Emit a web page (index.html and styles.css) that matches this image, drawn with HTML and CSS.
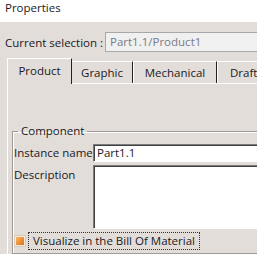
FILE: index.html
```html
<!DOCTYPE html>
<html lang="en">
<head>
    <meta charset="UTF-8">
    <title>Properties</title>
    <link rel="stylesheet" href="styles.css">
</head>
<body>
    <div class="title">Properties</div>
    <div class="dialog">
        <div class="selection">
            <span class="selection-label">Current selection :</span>
            <div class="selection-value">Part1.1/Product1</div>
        </div>
        <div class="tabs">
            <div class="tab active">Product</div>
            <div class="tab tab-graphic">Graphic</div>
            <div class="tab tab-mech">Mechanical</div>
            <div class="tab tab-draft">Drafting</div>
        </div>
        <div class="panel">
            <fieldset class="group">
                <legend>Component</legend>
                <div class="field">
                    <label class="field-label">Instance name</label>
                    <div class="input">Part1.1</div>
                </div>
                <div class="field">
                    <label class="field-label desc">Description</label>
                    <div class="textarea"></div>
                </div>
                <div class="check">
                    <span class="box"></span>
                    <span class="check-label">Visualize in the Bill Of Material</span>
                </div>
            </fieldset>
        </div>
    </div>
</body>
</html>
```

FILE: styles.css
```css
* {
    box-sizing: border-box;
}

html, body {
    margin: 0;
    overflow: hidden;
}

body {
    width: 257px;
    height: 254px;
    background: #e3ddd9;
    font-family: "Open Sans", "Noto Sans", sans-serif;
    font-size: 11.5px;
    color: #1a1a24;
    white-space: nowrap;
}

.title {
    background: #fff;
    height: 22px;
    padding-left: 5px;
    line-height: 16px;
}

.dialog {
    width: 400px;
}

/* current selection row */
.selection {
    display: flex;
    align-items: center;
    margin-top: 10px;
    padding-left: 5px;
}

.selection-label {
    width: 100px;
    flex: none;
}

.selection-value {
    width: 220px;
    height: 20px;
    line-height: 18px;
    padding-left: 4px;
    background: #f0f0f0;
    border: 1px solid #a8a8a8;
    color: #7a7a88;
}

/* tabs */
.tabs {
    display: flex;
    align-items: flex-end;
    margin-top: 6px;
    margin-left: 7px;
}

.tab {
    height: 22px;
    line-height: 21px;
    text-align: center;
    border-top: 1px solid #fff;
    border-left: 1px solid #fff;
    border-right: 1px solid #222;
}

.tab.active {
    position: relative;
    z-index: 1;
    width: 65px;
    height: 26px;
    line-height: 24px;
    margin-bottom: -1px;
    background: #e3ddd9;
}

.tab-graphic {
    width: 61px;
    border-left: none;
}

.tab-mech {
    width: 84px;
}

.tab-draft {
    width: 90px;
    text-align: left;
    padding-left: 12px;
}

/* tab panel */
.panel {
    margin-left: 7px;
    border-top: 1px solid #fff;
    border-left: 1px solid #fff;
    padding-left: 4px;
}

.group {
    margin: 39px 0 0 0;
    padding: 0 0 3px 1px;
    border: 1px solid #a09a96;
    box-shadow: inset 1px 1px 0 #fff;
}

.group legend {
    margin-left: 4px;
    padding: 0 3px;
    line-height: 16px;
}

.field {
    display: flex;
    margin-top: 5px;
}

.field + .field {
    margin-top: 3px;
}

.field-label {
    width: 79px;
    flex: none;
    line-height: 18px;
}

.field-label.desc {
    padding-top: 1px;
}

.input, .textarea {
    width: 250px;
    background: #fff;
    border: 1px solid;
    border-color: #7c7c7c #fff #fff #7c7c7c;
    box-shadow: inset 1px 1px 0 #404040;
}

.input {
    height: 18px;
    line-height: 16px;
    padding-left: 3px;
}

.textarea {
    height: 64px;
}

/* checkbox row */
.check {
    display: flex;
    align-items: center;
    margin-top: 3px;
    padding-left: 1px;
}

.box {
    width: 10px;
    height: 10px;
    margin-right: 3px;
    border: 1px solid #f8eadc;
    background: linear-gradient(135deg, #f8b860, #e0701a);
    box-shadow: 0 0 0 1px #d8c8b8;
}

.check-label {
    height: 18px;
    line-height: 16px;
    padding: 0 4px;
    border: 1px dotted #333;
}
```
